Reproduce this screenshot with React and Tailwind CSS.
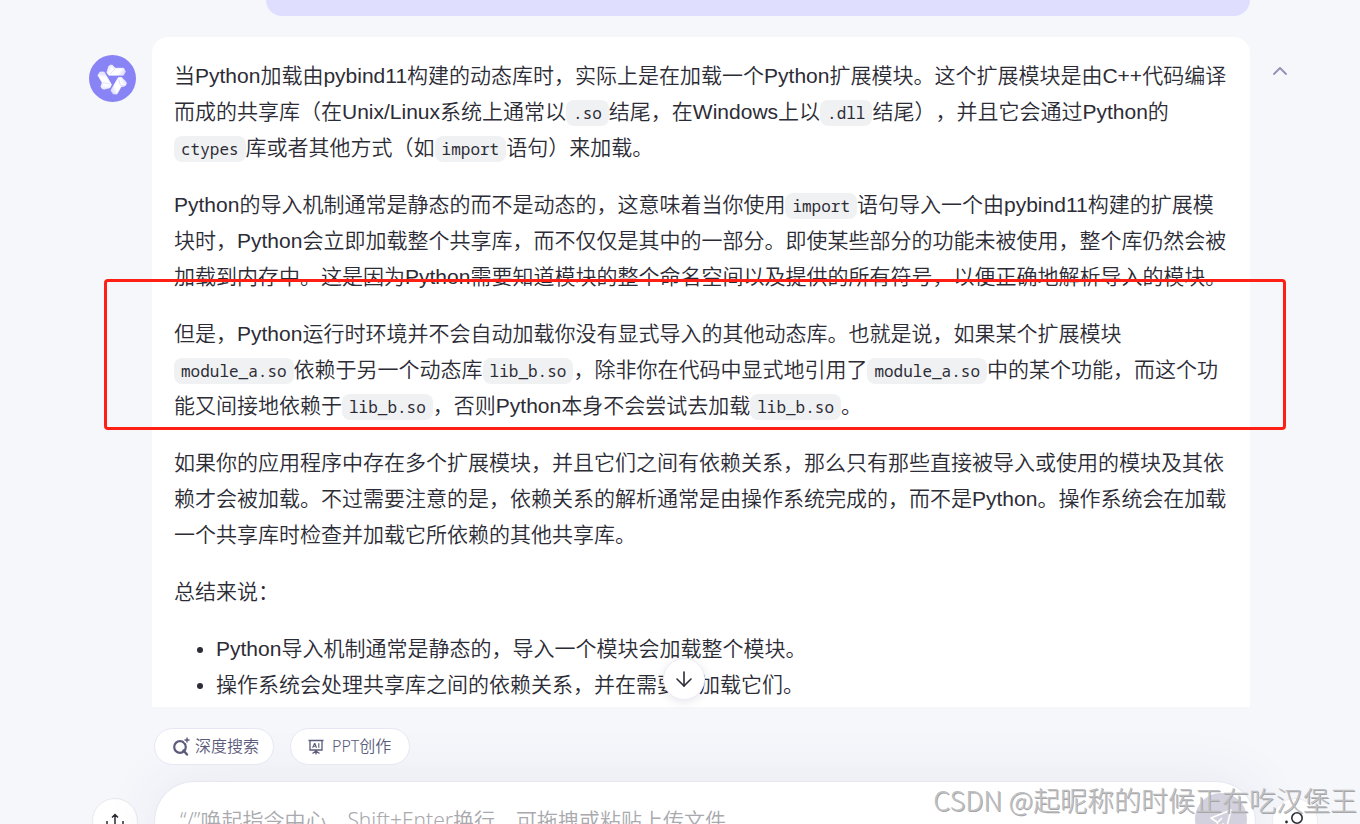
import { ArrowDown, ChevronUp } from 'lucide-react';

function Code({ children }) {
  return (
    <code className="px-[7px] py-0.5 rounded-lg bg-[#f0f1f3] text-[16px] leading-5 font-normal whitespace-nowrap font-['Noto_Sans_Mono','DejaVu_Sans_Mono',monospace]">
      {children}
    </code>
  );
}

function Logo() {
  const blade = 'M68 66 L73 48 Q77 41 85 44 L93 53 L119 53 L124 63 L118 74 L74 74 Z';
  return (
    <svg viewBox="14 13 142 142" className="w-[47px] h-[47px]" aria-hidden="true">
      <defs>
        <linearGradient id="blade" x1="0" y1="0" x2="1" y2="0.4">
          <stop offset="0" stopColor="#dedcfe" />
          <stop offset="0.4" stopColor="#ffffff" />
          <stop offset="0.8" stopColor="#ffffff" />
          <stop offset="1" stopColor="#e6e4fe" />
        </linearGradient>
      </defs>
      <circle cx="85" cy="84" r="71" fill="#8884f5" />
      {[0, 120, 240].map(angle => (
        <g key={angle} transform={`rotate(${angle} 86 86)`}>
          <path d={blade} fill="url(#blade)" stroke="url(#blade)" strokeWidth="2" strokeLinejoin="round" />
          <path d="M86 47 L91 57 L77 71" fill="none" stroke="#d5d3fd" strokeWidth="2" />
        </g>
      ))}
    </svg>
  );
}

function SearchIcon() {
  return (
    <svg viewBox="0 0 18 20" className="w-[18px] h-5" fill="none" stroke="#5b5b7b" aria-hidden="true">
      <circle cx="8" cy="10" r="5.8" strokeWidth="2.2" />
      <path d="M11.5 13.5l3.5 4" strokeWidth="2.4" strokeLinecap="round" />
      <circle cx="15" cy="3" r="3.2" fill="#fff" stroke="none" />
      <path d="M15 0.5v5M12.5 3h5" strokeWidth="1.4" />
    </svg>
  );
}

function SlidesIcon() {
  return (
    <svg viewBox="0 0 16 16" className="w-4 h-4" fill="none" stroke="#5b5b7b" strokeWidth="1.3" aria-hidden="true">
      <path d="M0.5 1.5h15M2 1.5v9.5h12V1.5M8 11v4.5M8 12l-3.5 2.5M8 12l3.5 2.5" />
      <path d="M4.6 8.8l1.9-4.3h.4l1.6 4.3M5.2 7.3h2.8M10.8 4.2v4.6" strokeWidth="1.1" />
    </svg>
  );
}

function Chip({ icon, children }) {
  return (
    <button className="flex items-center h-[37px] min-w-[120px] pl-[17px] pr-[14px] rounded-full border border-[#e6e7f2] bg-white text-[16px] text-[#5b5b7b]">
      {icon}
      <span className="pb-0.5">{children}</span>
    </button>
  );
}

export default function App() {
  return (
    <div className="relative flex flex-col h-screen overflow-hidden bg-[#f6f7fb] text-[#2c2c36] font-['Liberation_Sans','Noto_Sans_CJK_SC',sans-serif]">
      {/* Conversation */}
      <main className="flex-1 min-h-0 overflow-hidden pl-[89px] pr-[63px]">
        <div className="h-4 ml-[177px] mr-[47px] rounded-b-2xl bg-[#e0deff]" />

        <div className="flex items-start mt-[21px]">
          <div className="shrink-0 mt-[18px] mr-4">
            <Logo />
          </div>
          <article className="flex-1 min-w-0 px-[22px] pt-[21px] pb-10 rounded-2xl bg-white text-[21px] leading-9 space-y-[21px] font-[350] [text-spacing-trim:space-all]">
            <p>
              当Python加载由pybind11构建的动态库时，实际上是在加载一个Python扩展模块。这个扩展模块是由C++代码编译而成的共享库（在Unix/Linux系统上通常以<Code>.so</Code>结尾，在Windows上以<Code>.dll</Code>结尾），并且它会通过Python的<Code>ctypes</Code>库或者其他方式（如<Code>import</Code>语句）来加载。
            </p>
            <p>
              Python的导入机制通常是静态的而不是动态的，这意味着当你使用<Code>import</Code>语句导入一个由pybind11构建的扩展模块时，Python会立即加载整个共享库，而不仅仅是其中的一部分。即使某些部分的功能未被使用，整个库仍然会被加载到内存中。这是因为Python需要知道模块的整个命名空间以及提供的所有符号，以便正确地解析导入的模块。
            </p>
            <p>
              但是，Python运行时环境并不会自动加载你没有显式导入的其他动态库。也就是说，如果某个扩展模块<Code>module_a.so</Code>依赖于另一个动态库<Code>lib_b.so</Code>，除非你在代码中显式地引用了<Code>module_a.so</Code>中的某个功能，而这个功能又间接地依赖于<Code>lib_b.so</Code>，否则Python本身不会尝试去加载<Code>lib_b.so</Code>。
            </p>
            <p>
              如果你的应用程序中存在多个扩展模块，并且它们之间有依赖关系，那么只有那些直接被导入或使用的模块及其依赖才会被加载。不过需要注意的是，依赖关系的解析通常是由操作系统完成的，而不是Python。操作系统会在加载一个共享库时检查并加载它所依赖的其他共享库。
            </p>
            <p>总结来说：</p>
            <ul className="list-disc pl-[42px]">
              <li>Python导入机制通常是静态的，导入一个模块会加载整个模块。</li>
              <li>操作系统会处理共享库之间的依赖关系，并在需要时加载它们。</li>
            </ul>
          </article>
          <button aria-label="收起" className="shrink-0 mt-[22px] ml-[18px] mr-[5px] text-[#9291b5]">
            <ChevronUp size={24} strokeWidth={1.8} />
          </button>
        </div>
      </main>

      {/* Composer */}
      <footer className="shrink-0 h-[117px] pl-[92px] pr-[42px] pt-[21px] font-['Noto_Sans','Noto_Sans_CJK_SC',sans-serif]">
        <div className="relative z-10 flex gap-4 ml-[62px] font-[350]">
          <Chip icon={<span className="mr-[5px]"><SearchIcon /></span>}>深度搜索</Chip>
          <Chip icon={<span className="mr-2"><SlidesIcon /></span>}>PPT创作</Chip>
        </div>
        <div className="flex items-center gap-4 mt-4">
          <button aria-label="上传" className="shrink-0 flex items-center justify-center w-[46px] h-[46px] rounded-full border border-[#e8e8ee] bg-white">
            <svg viewBox="0 0 20 20" className="w-5 h-5" fill="none" stroke="#2c2c36" strokeWidth="1.5" aria-hidden="true">
              <path d="M10 14V3.5M7 6.5L10 3.5L13 6.5M2 10v8h16v-8" />
            </svg>
          </button>
          <div className="flex-1 flex items-center h-20 pl-[25px] pr-2 rounded-[40px] border border-[#e6e7f2] bg-white shadow-[0_0_60px_rgba(60,60,110,0.08)]">
            <input
              aria-label="消息"
              placeholder="“/”唤起指令中心，Shift+Enter换行，可拖拽或粘贴上传文件"
              className="flex-1 min-w-0 bg-transparent outline-none text-[21px] font-[350] [text-spacing-trim:space-all] placeholder:text-[#a9a9ae]"
            />
            <button aria-label="发送" className="shrink-0 flex items-center justify-center w-[52px] h-[52px] mb-1 rounded-full bg-[#d3d1dd]">
              <svg viewBox="0 0 24 24" className="w-6 h-6" fill="none" stroke="#fff" strokeWidth="1.6" strokeLinejoin="round" aria-hidden="true">
                <path d="M22 3L2 11l6 4 2 7 4-5 4 2zM13 11l-4 4" />
              </svg>
            </button>
          </div>
          <button aria-label="分享" className="shrink-0 flex items-center justify-center w-[46px] h-[46px] rounded-full border border-[#ececf2] bg-white">
            <svg viewBox="0 0 22 22" className="w-[22px] h-[22px]" fill="none" stroke="#2c2c36" strokeWidth="1.6" aria-hidden="true">
              <circle cx="13" cy="8" r="5.2" />
              <circle cx="2.5" cy="12" r="1.4" fill="#2c2c36" stroke="none" />
              <path d="M5 21a8 7 0 0 1 15 0" />
            </svg>
          </button>
        </div>
      </footer>

      {/* Scroll to bottom */}
      <button aria-label="回到底部" className="absolute bottom-[124px] left-[663px] z-10 flex items-center justify-center w-[42px] h-[42px] rounded-full border border-[#ececf4] bg-white shadow-[0_2px_10px_rgba(60,60,110,0.12)]">
        <ArrowDown size={24} strokeWidth={1.6} />
      </button>

      {/* Highlight frame */}
      <div className="absolute top-[279px] left-[104px] right-[74px] h-[151px] rounded border-3 border-[#ff2015] pointer-events-none" />

      {/* Watermark */}
      <div className="absolute bottom-1 right-[3px] z-20 text-[27px] leading-10 font-light whitespace-nowrap text-[#c0c0c2] [text-shadow:1px_1px_0_#a6a6a8] font-['Noto_Sans_CJK_SC',sans-serif] pointer-events-none">
        CSDN @起昵称的时候正在吃汉堡王
      </div>
    </div>
  );
}
